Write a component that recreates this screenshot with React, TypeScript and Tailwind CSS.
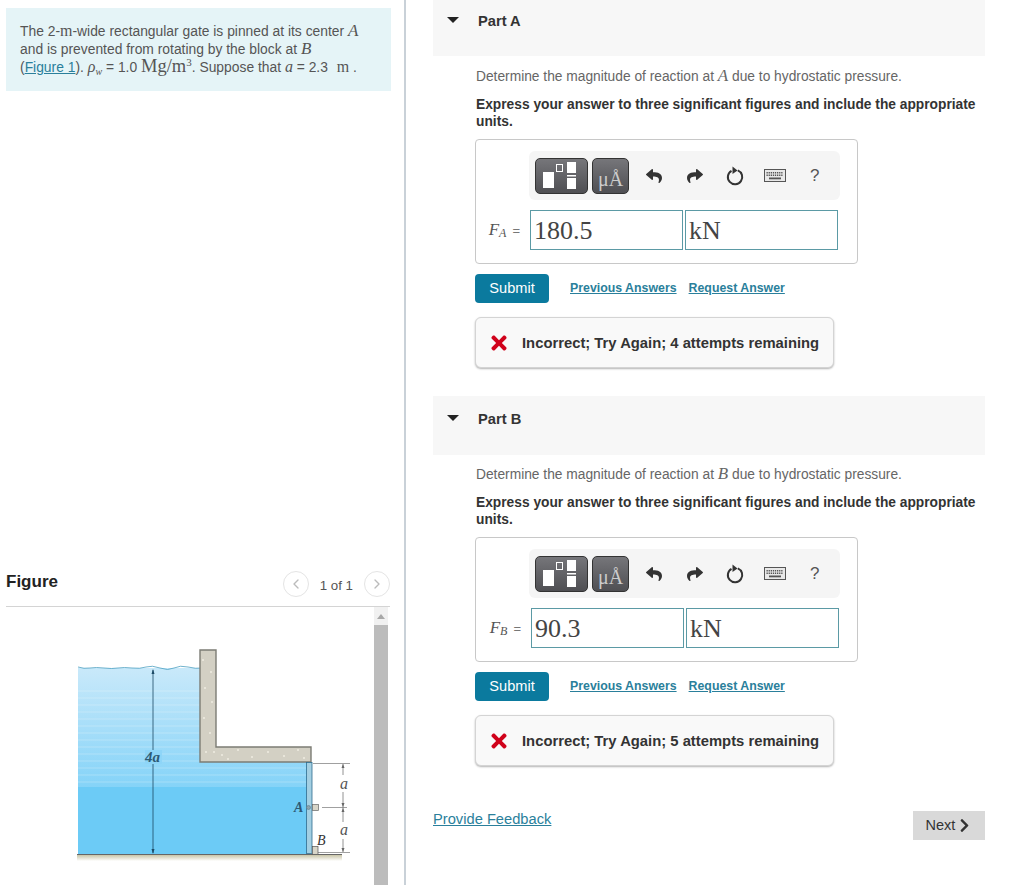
import React from "react";
import { FaChevronRight, FaReply, FaShare, FaTimes } from "react-icons/fa";
import { FiChevronLeft, FiChevronRight } from "react-icons/fi";

const sans = "font-['Liberation_Sans',Arial,sans-serif]";
const serif = "font-['Liberation_Serif','Times_New_Roman',serif]";

function TemplateIcon() {
  return (
    <svg width="51" height="34" viewBox="0 0 51 34">
      <rect x="7" y="13" width="11" height="16" fill="#fff" />
      <rect x="20.5" y="5.5" width="6" height="7" fill="none" stroke="#fff" strokeWidth="1" />
      <rect x="31" y="3" width="9" height="11" fill="#fff" />
      <rect x="31" y="16" width="9" height="1.5" fill="#fff" />
      <rect x="31" y="19" width="9" height="11" fill="#fff" />
    </svg>
  );
}

function ResetIcon() {
  return (
    <svg width="20" height="20" viewBox="0 0 20 20" fill="none">
      <path d="M6.5 4.8 A7.2 7.2 0 1 0 12.8 4.4" stroke="#333" strokeWidth="2" />
      <path d="M7.5 0.5 L12.5 4.5 L7.5 8 Z" fill="#333" />
    </svg>
  );
}

function KeyboardIcon() {
  const keys = [];
  for (let i = 0; i < 8; i++) {
    keys.push(<rect key={"a" + i} x={2.5 + i * 2.1} y="3" width="1.3" height="1.5" fill="#555" />);
    keys.push(<rect key={"b" + i} x={2.5 + i * 2.1} y="5.5" width="1.3" height="1.5" fill="#555" />);
  }
  return (
    <svg width="22" height="14" viewBox="0 0 22 14">
      <rect x="0.5" y="0.5" width="21" height="12" fill="#e8e8e8" stroke="#555" />
      {keys}
      <rect x="5" y="8.5" width="12" height="1.8" fill="#555" />
    </svg>
  );
}

function Toolbar() {
  return (
    <div className="flex h-[49px] w-[311px] items-center rounded-md bg-[#f5f5f5] pl-[6px]">
      <div className="h-[36px] w-[53px] rounded-[5px] border border-[#333] bg-gradient-to-b from-[#76767a] to-[#4f4f53]">
        <TemplateIcon />
      </div>
      <div className={`ml-[4px] flex h-[36px] w-[37px] items-end justify-center rounded-[5px] border border-[#333] bg-gradient-to-b from-[#76767a] to-[#4f4f53] pb-[3px] text-[20px] leading-[22px] text-[#ccc] ${serif}`}>
        μÅ
      </div>
      <div className="ml-[17px] flex w-[16px] justify-center text-[#333]">
        <FaReply size={16} />
      </div>
      <div className="ml-[25px] flex w-[16px] justify-center text-[#333]">
        <FaShare size={16} />
      </div>
      <div className="ml-[22px] flex w-[20px] justify-center">
        <ResetIcon />
      </div>
      <div className="ml-[19px] flex w-[22px] justify-center">
        <KeyboardIcon />
      </div>
      <div className="ml-[24px] text-[17px] leading-[20px] text-[#555]">?</div>
    </div>
  );
}

function AnswerBox({ sub, value, labelWidth }: { sub: string; value: string; labelWidth: string }) {
  return (
    <div className="h-[125px] w-[383px] rounded border border-[#c8c8c8] bg-white pt-[11px]">
      <div className="ml-[53px]">
        <Toolbar />
      </div>
      <div className="mt-[10px] flex items-center">
        <div className={`${labelWidth} flex items-baseline justify-end pr-[10px] text-[#555]`}>
          <span className={`text-[17px] italic ${serif}`}>F</span>
          <span className={`translate-y-[2px] text-[12px] italic leading-none ${serif}`}>{sub}</span>
          <span className="ml-[6px] text-[13px] text-[#777]">=</span>
        </div>
        <div className={`flex h-[40px] w-[153px] items-center border border-[#5b9aa5] pl-[3px] text-[26px] text-[#444] ${serif}`}>
          {value}
        </div>
        <div className={`ml-[2px] flex h-[40px] w-[153px] items-center border border-[#5b9aa5] pl-[3px] text-[26px] text-[#444] ${serif}`}>
          kN
        </div>
      </div>
    </div>
  );
}

function PartSection({
  title,
  headerClass,
  questionClass,
  question,
  sub,
  value,
  attempts,
  labelWidth,
}: {
  title: string;
  headerClass: string;
  questionClass: string;
  question: React.ReactNode;
  sub: string;
  value: string;
  attempts: number;
  labelWidth: string;
}) {
  return (
    <section>
      <div className={`flex items-start bg-[#f7f7f7] pl-[14px] ${headerClass}`}>
        <svg width="12" height="6" viewBox="0 0 12 6" className="mt-[5px]">
          <path d="M0 0 H12 L6 6 Z" fill="#222" />
        </svg>
        <span className="ml-[19px] text-[14.7px] font-bold leading-[18px] text-[#333]">{title}</span>
      </div>
      <div className="pl-[42px]">
        <p className={`ml-[1px] text-[13.77px] leading-[18px] text-[#666] ${questionClass}`}>{question}</p>
        <p className="ml-[1px] mt-[10px] text-[13.77px] font-bold leading-[17px] text-[#333]">
          Express your answer to three significant figures and include the appropriate units.
        </p>
        <div className="mt-[9px]">
          <AnswerBox sub={sub} value={value} labelWidth={labelWidth} />
        </div>
        <div className="mt-[10px] flex items-center">
          <button className="h-[29px] w-[74px] rounded-sm bg-[#0b7a9e] text-[14.6px] text-white">Submit</button>
          <a className="ml-[21px] text-[12.35px] font-bold text-[#2a7f9b] underline">Previous Answers</a>
          <a className="ml-[12px] text-[12.35px] font-bold text-[#2a7f9b] underline">Request Answer</a>
        </div>
        <div className="mt-[14px] flex h-[51px] w-[359px] items-center rounded-md border border-[#d4d4d4] bg-[#f9f9f9] pl-[12px] shadow-[0_1px_2px_rgba(0,0,0,0.3)]">
          <FaTimes size={22} className="text-[#d0021b]" />
          <span className="ml-[12px] pt-[1px] text-[14.8px] font-bold text-[#333]">Incorrect; Try Again; {attempts} attempts remaining</span>
        </div>
      </div>
    </section>
  );
}

function GateFigure() {
  const stripes = [];
  for (let i = 0; i < 14; i++) {
    stripes.push(<rect key={i} x="78" y={690 + i * 7} width={690 + i * 7 < 762 ? 122 : 229} height="2" fill="#ffffff" opacity="0.12" />);
  }
  const specks = [
    [203, 660], [211, 672], [205, 688], [212, 702], [204, 718], [210, 733], [206, 752], [222, 755],
    [238, 750], [252, 757], [268, 752], [284, 756], [298, 750], [304, 758], [214, 752], [228, 759],
  ];
  return (
    <svg width="368" height="278" viewBox="6 607 368 278" className="block shrink-0">
      <defs>
        <linearGradient id="water" gradientUnits="userSpaceOnUse" x1="0" y1="668" x2="0" y2="788">
          <stop offset="0" stopColor="#c9e9fa" />
          <stop offset="1" stopColor="#84d3f8" />
        </linearGradient>
        <linearGradient id="ground" x1="0" y1="0" x2="0" y2="1">
          <stop offset="0" stopColor="#c9c5a8" />
          <stop offset="1" stopColor="#ffffff" />
        </linearGradient>
      </defs>
      <path d="M78 668 H200 V762 H307 V788 H78 Z" fill="url(#water)" />
      {stripes}
      <rect x="78" y="787" width="229" height="67" fill="#6ccbf6" />
      <path d="M78 667 q6 2 12 1 t14 0 t14 0 t14 0 t14 -1 t14 1 t14 0 t14 -1 t14 1 t10 0" fill="none" stroke="#4d9fc0" strokeWidth="0.8" />
      <path d="M200 650 H216 V747 H311 V762 H200 Z" fill="#d3d0c4" stroke="#7c7c74" strokeWidth="1.4" />
      {specks.map(([x, y], i) => (
        <circle key={i} cx={x} cy={y} r="1" fill="#efece2" />
      ))}
      <rect x="306.5" y="762.5" width="5.5" height="91" fill="#a3cfe2" stroke="#2f6d8e" strokeWidth="0.8" />
      <rect x="77" y="855" width="265" height="6" fill="url(#ground)" />
      <path d="M77 854.5 H342" stroke="#666" strokeWidth="1.2" />
      <path d="M153 670 V853" stroke="#1c4a66" strokeWidth="0.8" />
      <path d="M153 669 l-1.5 5 h3 Z M153 854 l-1.5 -5 h3 Z" fill="#1c4a66" />
      <rect x="145" y="750" width="17" height="14" fill="#8ed5f8" />
      <text x="145" y="762" fontSize="15" fontWeight="bold" fontStyle="italic" fill="#2d5a75" fontFamily="'Liberation Serif', serif">4a</text>
      <path d="M313 763.5 H350 M322 807.5 H347 M318 852.5 H350" stroke="#888" strokeWidth="0.8" />
      <path d="M343 764 V775 M343 792 V822 M343 839 V852" stroke="#777" strokeWidth="0.8" />
      <path d="M343 764 l-1.5 4 h3 Z M343 807 l-1.5 -4 h3 Z M343 808 l-1.5 4 h3 Z M343 852 l-1.5 -4 h3 Z" fill="#666" />
      <text x="340" y="789" fontSize="16" fontStyle="italic" fill="#555" fontFamily="'Liberation Serif', serif">a</text>
      <text x="340" y="835" fontSize="16" fontStyle="italic" fill="#555" fontFamily="'Liberation Serif', serif">a</text>
      <text x="294" y="812" fontSize="14" fontWeight="bold" fontStyle="italic" fill="#2d5a75" fontFamily="'Liberation Serif', serif">A</text>
      <circle cx="308.5" cy="807.5" r="2" fill="#8ba4b0" stroke="#5a7a8a" strokeWidth="0.6" />
      <rect x="312.5" y="804.5" width="6" height="6" fill="#d8d5c8" stroke="#666" strokeWidth="0.7" />
      <text x="317" y="845" fontSize="14" fontStyle="italic" fill="#333" fontFamily="'Liberation Serif', serif">B</text>
      <rect x="312.5" y="846.5" width="5.5" height="8" fill="#d8d5c8" stroke="#555" strokeWidth="0.7" />
    </svg>
  );
}

export default function App() {
  return (
    <div className={`flex h-[885px] w-[1024px] overflow-hidden bg-white ${sans}`}>
      <aside className="h-full w-[406px] shrink-0 border-r-2 border-[#c9d1d8] pl-[6px]">
        <div className="mt-[8px] h-[83px] w-[385px] bg-[#e5f4f7] px-[14px] pt-[15px] text-[13.85px] leading-[17.5px] text-[#555]">
          The 2-<span className={`text-[16px] leading-[0] ${serif}`}>m</span>-wide rectangular gate is pinned at its center{" "}
          <i className={`text-[17px] leading-[0] ${serif}`}>A</i> and is prevented from rotating by the block at{" "}
          <i className={`text-[17px] leading-[0] ${serif}`}>B</i>
          <div className="mt-[1px]">
            (<a className="text-[#2a7f9b] underline">Figure 1</a>).{" "}
            <i className={`text-[16px] leading-[0] ${serif}`}>ρ<span className="relative top-[3px] text-[10px] leading-[0]">w</span></i> = 1.0{" "}
            <span className={`text-[18.5px] leading-[0] ${serif}`}>Mg/m<span className="relative -top-[6px] text-[11px] leading-[0]">3</span></span>. Suppose that{" "}
            <i className={`text-[16px] leading-[0] ${serif}`}>a</i> = 2.3 <span className={`ml-[5px] text-[16px] leading-[0] ${serif}`}>m</span> .
          </div>
        </div>

        <div className="mt-[480px] flex h-[36px] w-[384px] items-start justify-between border-b border-[#d4d4d4]">
          <h2 className="pt-[1px] text-[17px] font-bold leading-[20px] text-[#222]">Figure</h2>
          <div className="flex items-center">
            <span className="flex h-[26px] w-[26px] items-center justify-center rounded-full border border-[#e4e4e4] text-[#bbb]">
              <FiChevronLeft size={16} />
            </span>
            <span className="ml-[11px] mr-[11px] pt-[4px] text-[13.3px] text-[#555]">1 of 1</span>
            <span className="flex h-[26px] w-[26px] items-center justify-center rounded-full border border-[#e4e4e4] text-[#bbb]">
              <FiChevronRight size={16} />
            </span>
          </div>
        </div>

        <div className="flex h-[278px] w-[384px]">
          <GateFigure />
          <div className="flex w-[14px] flex-col">
            <div className="flex h-[18px] items-center justify-center bg-[#f1f1f1]">
              <svg width="8" height="5" viewBox="0 0 8 5">
                <path d="M0 5 L4 0 L8 5 Z" fill="#a8a8a8" />
              </svg>
            </div>
            <div className="flex-1 bg-[#bcbcbc]" />
          </div>
        </div>
      </aside>

      <main className="flex-1 pl-[27px] pr-[39px]">
        <PartSection
          title="Part A"
          headerClass="h-[56px] pt-[12px]"
          questionClass="mt-[11px]"
          question={
            <>
              Determine the magnitude of reaction at <i className={`text-[17px] leading-none ${serif}`}>A</i> due to hydrostatic pressure.
            </>
          }
          sub="A"
          value="180.5"
          attempts={4}
          labelWidth="w-[54px]"
        />
        <div className="h-[28px]" />
        <PartSection
          title="Part B"
          headerClass="h-[59px] pt-[14px]"
          questionClass="mt-[10px]"
          question={
            <>
              Determine the magnitude of reaction at <i className={`text-[17px] leading-none ${serif}`}>B</i> due to hydrostatic pressure.
            </>
          }
          sub="B"
          value="90.3"
          attempts={5}
          labelWidth="w-[55px]"
        />
        <div className="mt-[44px] flex items-start justify-between">
          <a className="text-[14.7px] leading-[18px] text-[#2a7f9b] underline">Provide Feedback</a>
          <button className="mt-[1px] flex h-[29px] w-[72px] items-center justify-center gap-[2px] bg-[#d9d9d9] text-[14.5px] text-[#333]">
            Next <FaChevronRight size={15} />
          </button>
        </div>
      </main>
    </div>
  );
}
